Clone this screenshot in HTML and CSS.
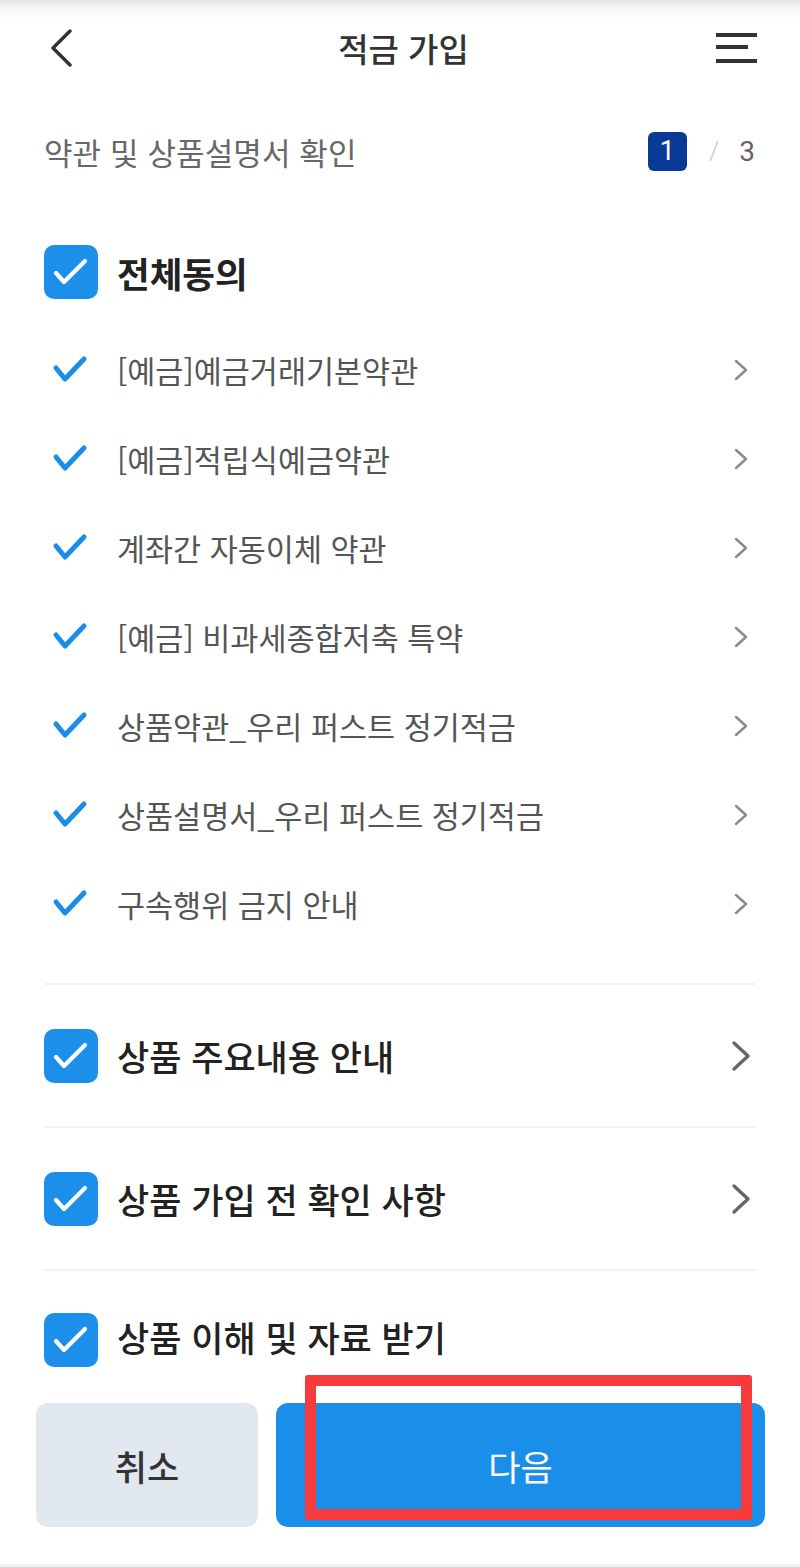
FILE: index.html
```html
<!DOCTYPE html>
<html lang="ko">
<head>
<meta charset="utf-8">
<title>적금 가입</title>
<link rel="stylesheet" href="styles.css">
</head>
<body>
<div class="page">
  <header class="topbar">
    <button class="icon-btn back" aria-label="뒤로">
      <svg width="24" height="38" viewBox="0 0 24 38"><path d="M21 2 L4 19 L21 36" fill="none" stroke="#333" stroke-width="3.4" stroke-linecap="round" stroke-linejoin="round"/></svg>
    </button>
    <h1 class="title">적금 가입</h1>
    <button class="icon-btn menu" aria-label="메뉴">
      <svg width="42" height="32" viewBox="0 0 42 32"><g stroke="#333" stroke-width="4"><line x1="0" y1="3" x2="41" y2="3"/><line x1="0" y1="15" x2="32" y2="15"/><line x1="0" y1="29" x2="41" y2="29"/></g></svg>
    </button>
  </header>

  <main class="content">
    <div class="step-row">
      <span class="step-title">약관 및 상품설명서 확인</span>
      <span class="step-count"><span class="step-now">1</span><span class="step-sep">/</span><span class="step-total">3</span></span>
    </div>

    <div class="all-row">
      <span class="box"><svg width="54" height="54" viewBox="0 0 54 54"><path d="M12 28 L20 37 L41 16" fill="none" stroke="#fff" stroke-width="4.2" stroke-linecap="round" stroke-linejoin="round"/></svg></span>
      <span class="all-label">전체동의</span>
    </div>

    <ul class="terms">
      <li class="term"><span class="tick"><svg width="40" height="30" viewBox="0 0 40 30"><path d="M6 13 L15 24 L34 4" fill="none" stroke="#1b8de8" stroke-width="5" stroke-linecap="round" stroke-linejoin="round"/></svg></span><span class="term-label">[예금]예금거래기본약관</span><span class="chev"><svg width="14" height="22" viewBox="0 0 14 22"><path d="M2 2 L12 11 L2 20" fill="none" stroke="#8a8a8a" stroke-width="2.4" stroke-linecap="round" stroke-linejoin="round"/></svg></span></li>
      <li class="term"><span class="tick"><svg width="40" height="30" viewBox="0 0 40 30"><path d="M6 13 L15 24 L34 4" fill="none" stroke="#1b8de8" stroke-width="5" stroke-linecap="round" stroke-linejoin="round"/></svg></span><span class="term-label">[예금]적립식예금약관</span><span class="chev"><svg width="14" height="22" viewBox="0 0 14 22"><path d="M2 2 L12 11 L2 20" fill="none" stroke="#8a8a8a" stroke-width="2.4" stroke-linecap="round" stroke-linejoin="round"/></svg></span></li>
      <li class="term"><span class="tick"><svg width="40" height="30" viewBox="0 0 40 30"><path d="M6 13 L15 24 L34 4" fill="none" stroke="#1b8de8" stroke-width="5" stroke-linecap="round" stroke-linejoin="round"/></svg></span><span class="term-label">계좌간 자동이체 약관</span><span class="chev"><svg width="14" height="22" viewBox="0 0 14 22"><path d="M2 2 L12 11 L2 20" fill="none" stroke="#8a8a8a" stroke-width="2.4" stroke-linecap="round" stroke-linejoin="round"/></svg></span></li>
      <li class="term"><span class="tick"><svg width="40" height="30" viewBox="0 0 40 30"><path d="M6 13 L15 24 L34 4" fill="none" stroke="#1b8de8" stroke-width="5" stroke-linecap="round" stroke-linejoin="round"/></svg></span><span class="term-label">[예금] 비과세종합저축 특약</span><span class="chev"><svg width="14" height="22" viewBox="0 0 14 22"><path d="M2 2 L12 11 L2 20" fill="none" stroke="#8a8a8a" stroke-width="2.4" stroke-linecap="round" stroke-linejoin="round"/></svg></span></li>
      <li class="term"><span class="tick"><svg width="40" height="30" viewBox="0 0 40 30"><path d="M6 13 L15 24 L34 4" fill="none" stroke="#1b8de8" stroke-width="5" stroke-linecap="round" stroke-linejoin="round"/></svg></span><span class="term-label">상품약관_우리 퍼스트 정기적금</span><span class="chev"><svg width="14" height="22" viewBox="0 0 14 22"><path d="M2 2 L12 11 L2 20" fill="none" stroke="#8a8a8a" stroke-width="2.4" stroke-linecap="round" stroke-linejoin="round"/></svg></span></li>
      <li class="term"><span class="tick"><svg width="40" height="30" viewBox="0 0 40 30"><path d="M6 13 L15 24 L34 4" fill="none" stroke="#1b8de8" stroke-width="5" stroke-linecap="round" stroke-linejoin="round"/></svg></span><span class="term-label">상품설명서_우리 퍼스트 정기적금</span><span class="chev"><svg width="14" height="22" viewBox="0 0 14 22"><path d="M2 2 L12 11 L2 20" fill="none" stroke="#8a8a8a" stroke-width="2.4" stroke-linecap="round" stroke-linejoin="round"/></svg></span></li>
      <li class="term"><span class="tick"><svg width="40" height="30" viewBox="0 0 40 30"><path d="M6 13 L15 24 L34 4" fill="none" stroke="#1b8de8" stroke-width="5" stroke-linecap="round" stroke-linejoin="round"/></svg></span><span class="term-label">구속행위 금지 안내</span><span class="chev"><svg width="14" height="22" viewBox="0 0 14 22"><path d="M2 2 L12 11 L2 20" fill="none" stroke="#8a8a8a" stroke-width="2.4" stroke-linecap="round" stroke-linejoin="round"/></svg></span></li>
    </ul>

    <div class="section">
      <span class="box"><svg width="54" height="54" viewBox="0 0 54 54"><path d="M12 28 L20 37 L41 16" fill="none" stroke="#fff" stroke-width="4.2" stroke-linecap="round" stroke-linejoin="round"/></svg></span>
      <span class="section-label">상품 주요내용 안내</span>
      <span class="chev-big"><svg width="20" height="32" viewBox="0 0 20 32"><path d="M3 3 L17 16 L3 29" fill="none" stroke="#666" stroke-width="3.4" stroke-linecap="round" stroke-linejoin="round"/></svg></span>
    </div>
    <div class="section">
      <span class="box"><svg width="54" height="54" viewBox="0 0 54 54"><path d="M12 28 L20 37 L41 16" fill="none" stroke="#fff" stroke-width="4.2" stroke-linecap="round" stroke-linejoin="round"/></svg></span>
      <span class="section-label">상품 가입 전 확인 사항</span>
      <span class="chev-big"><svg width="20" height="32" viewBox="0 0 20 32"><path d="M3 3 L17 16 L3 29" fill="none" stroke="#666" stroke-width="3.4" stroke-linecap="round" stroke-linejoin="round"/></svg></span>
    </div>
    <div class="section last">
      <span class="box"><svg width="54" height="54" viewBox="0 0 54 54"><path d="M12 28 L20 37 L41 16" fill="none" stroke="#fff" stroke-width="4.2" stroke-linecap="round" stroke-linejoin="round"/></svg></span>
      <span class="section-label">상품 이해 및 자료 받기</span>
    </div>
  </main>

  <footer class="actions">
    <button class="btn cancel">취소</button>
    <button class="btn next">다음</button>
    <span class="highlight"></span>
  </footer>
  <div class="bottom-strip"></div>
</div>
</body>
</html>
```

FILE: styles.css
```css
* { box-sizing: border-box; }
html, body { margin: 0; padding: 0; background: #fff; }
body {
  font-family: "Noto Sans CJK KR", "Noto Sans", Roboto, sans-serif;
  color: #333;
}
.page { width: 800px; height: 1567px; display: flex; flex-direction: column; overflow: hidden; }

.topbar {
  height: 95px;
  display: grid;
  grid-template-columns: 1fr auto 1fr;
  align-items: center;
  padding: 0 42px 0 49px;
  background: linear-gradient(#e4e4e4 0, #f6f6f6 8px, #fff 20px);
}
.icon-btn { background: none; border: 0; padding: 0; display: flex; }
.back { justify-self: start; }
.menu { justify-self: end; }
.title {
  margin: 0;
  font-size: 33px;
  font-weight: 500;
  color: #333;
}

.content { padding: 0 44px; display: flex; flex-direction: column; }

.step-row {
  margin-top: 25px;
  height: 62px;
  display: flex;
  align-items: center;
  justify-content: space-between;
}
.step-title { font-size: 31px; color: #686868; letter-spacing: 0.1px; }
.step-count { display: flex; align-items: center; font-family: Roboto, "Noto Sans", sans-serif; }
.step-now {
  width: 39px; height: 39px; border-radius: 6px;
  background: #0a3a98; color: #fff;
  display: flex; align-items: center; justify-content: center;
  font-size: 27px;
}
.step-sep { color: #c8c8c8; font-size: 26px; margin: 0 20px 0 22px; font-weight: 300; }
.step-total { color: #666; font-size: 28px; margin-right: 1px; }

.box {
  width: 54px; height: 54px; border-radius: 10px;
  background: #1b8fea;
  display: flex; flex-shrink: 0;
}

.all-row { margin-top: 63px; height: 54px; display: flex; align-items: center; }
.all-label { margin-left: 19px; font-size: 35.5px; font-weight: 700; color: #222; }

.terms { list-style: none; margin: 26px 0 0; padding: 0; }
.term { height: 89px; display: flex; align-items: center; }
.tick { width: 40px; height: 30px; margin-left: 6px; display: flex; }
.term-label { margin-left: 27px; font-size: 30.5px; color: #555; flex: 1; }
.chev { display: flex; margin-right: 8px; }

.section {
  height: 143px;
  border-top: 2px solid #f1f2f4;
  display: flex;
  align-items: center;
}
.terms + .section { margin-top: 35px; }
.section-label { margin-left: 19px; font-size: 35px; font-weight: 500; color: #222; flex: 1; }
.chev-big { display: flex; margin-right: 5px; }
.section.last { height: 135px; align-items: flex-start; padding-top: 42px; }
.section.last .section-label { margin-top: -2px; }

.actions {
  position: relative;
  display: flex;
  gap: 18px;
  padding: 0 35px 0 36px;
  margin-top: -1px;
}
.btn {
  height: 124px;
  border: 0;
  border-radius: 12px;
  font-family: "Noto Sans CJK KR", sans-serif;
  font-size: 35px;
}
.cancel { width: 222px; background: #e2e8ef; color: #333; font-weight: 500; }
.next { flex: 1; background: #1a8fe9; color: #fff; font-weight: 400; }
.highlight {
  position: absolute;
  left: 305px; top: -28px;
  width: 447px; height: 145px;
  border: 11px solid #f73a3b;
  border-radius: 3px;
  pointer-events: none;
}
.bottom-strip { margin-top: auto; height: 3px; background: #f0f1f4; }
```
